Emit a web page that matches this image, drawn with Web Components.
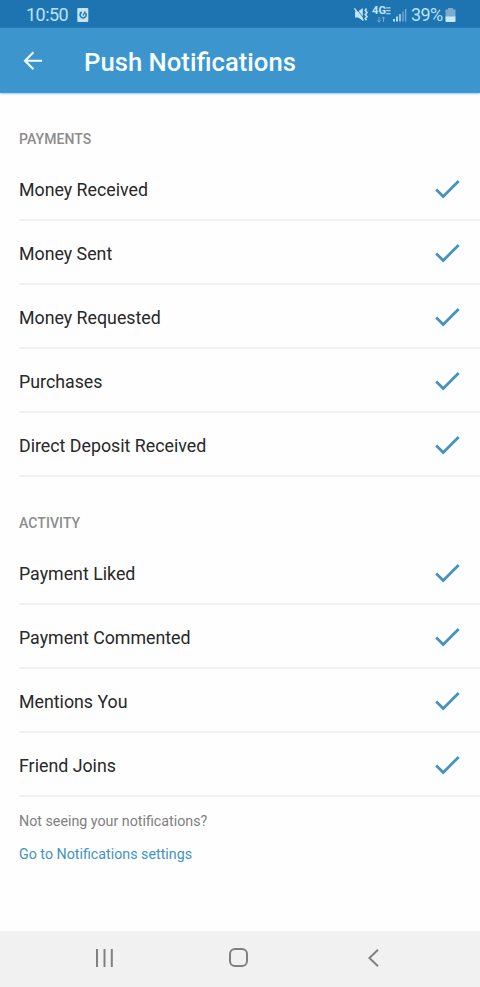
<!DOCTYPE html>
<html lang="en">
<head>
<meta charset="utf-8">
<title>Push Notifications</title>
<style>
body { margin: 0; background: #fefefe; font-family: Roboto, sans-serif; color: #282828; }
</style>
</head>
<body>
<app-screen></app-screen>
<script>
const define = (name, html) => {
  const template = document.createElement('template');
  template.innerHTML = html;
  customElements.define(name, class extends HTMLElement {
    constructor() {
      super();
      this.attachShadow({ mode: 'open' }).append(template.content.cloneNode(true));
    }
  });
};

define('status-bar', `
<style>
:host { display: flex; align-items: center; height: 28px; box-sizing: border-box; padding: 1px 24px 0 26px; background: #1e74b0; color: #b9e2fb; font-size: 18px; line-height: 28px; }
.time { width: 51px; letter-spacing: -.55px; }
.space { flex: 1; }
.percent { width: 34px; letter-spacing: -.6px; }
svg { display: block; flex: none; }
</style>
<span class="time">10:50</span>
<svg width="12" height="14" viewBox="0 0 12 14"><rect x=".3" width="11" height="14" rx="1" fill="#c1e4f8"/><path d="M3.8 5A3 3 0 1 0 8.4 5M6 7.5L8.2 3.5M2.8 4.5H5" fill="none" stroke="#2677ae" stroke-width="1.4"/></svg>
<span class="space"></span>
<svg width="57" height="20" viewBox="0 0 57 20">
  <g fill="#bfe5f9">
    <path d="M1 6.5H4L8.8 3V15.5L4 12.5H1Z"/>
    <path d="M1.8 3L10 13.5" stroke="#1e74b0" stroke-width=".8"/>
    <path d="M.5 3.5L9.3 15.5" fill="none" stroke="#bfe5f9" stroke-width="1.4"/>
    <path d="M12.5 3.5L11.3 5.5L13 7.5L11.3 9.5L13 11.5L11.3 13.5L12.5 15.2" fill="none" stroke="#b9e1f7" stroke-width="1.7"/>
    <text x="18" y="9.4" font-family="Roboto" font-size="10" font-weight="700" textLength="14" lengthAdjust="spacingAndGlyphs">4G</text>
    <path d="M32.2 2.2H36.5V3.4H32.2ZM32.2 5.1H36.5V6.3H32.2ZM32.2 8H36.5V9.2H32.2Z" opacity=".85"/>
  </g>
  <path d="M25 12V17M23.4 15.4L25 17.2L26.6 15.4M29.5 17V12M27.9 13.7L29.5 11.9L31.1 13.7" fill="none" stroke="#6daed5" stroke-width="1"/>
  <path d="M40 14V16.5M43 11.5V16.5" stroke="#bfe5f9" stroke-width="1.8"/>
  <path d="M46 9V16.5" stroke="#a9d7f1" stroke-width="1.6"/>
  <path d="M49 6.5V16.5M51.6 4V16.5" stroke="#69a9d2" stroke-width="1.5"/>
</svg>
<span class="percent">39%</span>
<svg width="11" height="14" viewBox="0 0 11 14"><path d="M3 0H8V1.5H10.5V9H.5V1.5H3Z" fill="#78acd4"/><path d="M.5 8.5H10.5V13Q10.5 14 9.5 14H1.5Q.5 14 .5 13Z" fill="#c9eafb"/></svg>
`);

define('app-header', `
<style>
:host { display: flex; align-items: center; height: 65px; padding: 1px 0 0 23px; box-sizing: border-box; background: #3d95ce; color: #f5fdff; box-shadow: 0 1px 2px #9acbe8; }
svg { width: 20px; height: 20px; margin-right: 41px; }
h1 { margin: 0; padding-top: 1px; font-size: 25.7px; line-height: 32px; font-weight: 500; }
</style>
<svg viewBox="0 0 20 20" fill="none" stroke="#f3fcff" stroke-width="2.1"><path d="M19 9.8H2M10.5 1.3L2 9.8L10.5 18.3"/></svg>
<h1><slot></slot></h1>
`);

define('notification-section', `
<style>
:host { display: block; padding-left: 19px; }
h2 { margin: 0; height: 64px; padding-top: 18px; box-sizing: border-box; font-size: 14px; line-height: 57px; font-weight: 500; letter-spacing: .08px; color: #8c8c8c; }
</style>
<h2><slot name="title"></slot></h2><slot></slot>
`);

define('notification-row', `
<style>
:host { display: flex; align-items: center; justify-content: space-between; height: 64px; box-sizing: border-box; border-bottom: 2px solid #f1f1f1; padding: 4px 20px 0 0; font-size: 17.8px; line-height: 24px; }
svg { width: 25px; height: 20px; display: block; }
</style>
<span><slot></slot></span>
<svg viewBox="0 0 25 20" fill="none" stroke="#4293c3" stroke-width="2.7"><path d="M1.2 9.5L8.2 16.5L23.7 1"/></svg>
`);

define('help-footer', `
<style>
:host { display: block; padding: 8px 19px 0; font-size: 14.25px; line-height: 33px; }
p { margin: 0; color: #808080; }
a { display: block; color: #4293c3; text-decoration: none; }
</style>
<p><slot></slot></p><a><slot name="link"></slot></a>
`);

define('navigation-bar', `
<style>
:host { display: flex; align-items: center; height: 56px; padding: 0 0 3px 95px; box-sizing: border-box; background: #f1f1f1; }
svg { display: block; fill: none; stroke: #808080; stroke-width: 2; }
.home { margin: 0 119px 0 115px; }
</style>
<svg width="19" height="18"><path d="M2 0V18M9.5 0V18M16.8 0V18"/></svg>
<svg class="home" width="20" height="20"><rect x="1" y="1" width="17" height="17" rx="5"/></svg>
<svg width="11" height="18"><path d="M10 .8L1.4 9L10 17.2"/></svg>
`);

define('app-screen', `
<style>
:host { display: flex; flex-direction: column; height: 987px; overflow: hidden; }
main { flex: 1; }
</style>
<status-bar></status-bar>
<app-header>Push Notifications</app-header>
<main>
  <notification-section><span slot="title">PAYMENTS</span>
    <notification-row>Money Received</notification-row>
    <notification-row>Money Sent</notification-row>
    <notification-row>Money Requested</notification-row>
    <notification-row>Purchases</notification-row>
    <notification-row>Direct Deposit Received</notification-row>
  </notification-section>
  <notification-section><span slot="title">ACTIVITY</span>
    <notification-row>Payment Liked</notification-row>
    <notification-row>Payment Commented</notification-row>
    <notification-row>Mentions You</notification-row>
    <notification-row>Friend Joins</notification-row>
  </notification-section>
  <help-footer>Not seeing your notifications?<span slot="link">Go to Notifications settings</span></help-footer>
</main>
<navigation-bar></navigation-bar>
`);
</script>
</body>
</html>
